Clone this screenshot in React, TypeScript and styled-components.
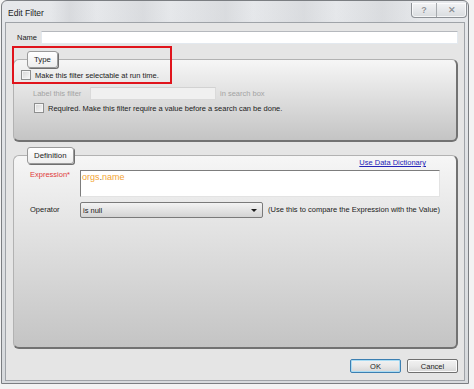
import styled, { createGlobalStyle } from "styled-components";

const Global = createGlobalStyle`
  body {
    margin: 0;
    background: #f3f3f3;
    font-family: "Liberation Sans", Arial, sans-serif;
    font-size: 7.5px;
    color: #1b1b1b;
  }
`;

const Window = styled.div`
  width: 466px;
  height: 381px;
  margin-left: 1px;
  border: 1px solid #7b7e82;
  border-radius: 6px 6px 0 0;
  background: linear-gradient(#e6e8eb, #d7dadd);
  padding: 0 3px 2px 3px;
  display: flex;
  flex-direction: column;
  box-sizing: content-box;
  width: 460px;
  height: 380px;
`;

const TitleBar = styled.div`
  height: 21px;
  display: flex;
  align-items: flex-start;
  justify-content: space-between;
  background: linear-gradient(
    90deg,
    transparent 10%,
    rgba(190, 192, 196, 0.35) 14%,
    transparent 20%,
    rgba(190, 192, 196, 0.3) 30%,
    transparent 36%,
    rgba(190, 192, 196, 0.3) 48%,
    transparent 54%,
    rgba(190, 192, 196, 0.3) 65%,
    transparent 72%,
    rgba(190, 192, 196, 0.3) 82%,
    transparent 90%
  );
`;

const Title = styled.span`
  font-size: 8.5px;
  margin: 7px 0 0 3px;
  color: #1c1c1c;
`;

const CaptionButtons = styled.div`
  display: flex;
  margin-top: 2px;
  margin-right: -2px;
  border: 1px solid #8d9196;
  border-top: none;
  border-radius: 0 0 4px 4px;
  background: linear-gradient(#f2f3f5, #d9dcdf);
  box-shadow: inset 0 0 0 1px rgba(255, 255, 255, 0.7);
`;

const CaptionButton = styled.div<{ $wide?: boolean }>`
  width: ${(p) => (p.$wide ? 29 : 24)}px;
  height: 14px;
  display: flex;
  align-items: center;
  justify-content: center;
  font-size: 9px;
  font-weight: bold;
  color: #8f9297;
  text-shadow: 0 0 1px #fff;
  & + & {
    border-left: 1px solid #a6aaae;
  }
`;

const Client = styled.div`
  flex: 1;
  border: 1px solid #9fa3a8;
  background: #e5e5e5;
  display: flex;
  flex-direction: column;
`;

const NameRow = styled.div`
  display: flex;
  align-items: center;
  margin: 8px 6px 0 11px;
  height: 13px;
`;

const FieldLabel = styled.span<{ $width?: number; $color?: string }>`
  width: ${(p) => (p.$width ? `${p.$width}px` : "auto")};
  flex-shrink: 0;
  color: ${(p) => p.$color ?? "#1b1b1b"};
  white-space: nowrap;
`;

const TextInput = styled.div<{ $disabled?: boolean; $width?: number }>`
  height: 13px;
  box-sizing: border-box;
  ${(p) => (p.$width ? `width: ${p.$width}px;` : "flex: 1;")}
  background: ${(p) => (p.$disabled ? "#f0f0f0" : "#ffffff")};
  border: 1px solid ${(p) => (p.$disabled ? "#dadada" : "#e3e9ef")};
  border-top-color: ${(p) => (p.$disabled ? "#d2d2d2" : "#b5b8bd")};
`;

const Group = styled.div<{ $top: number }>`
  position: relative;
  display: flex;
  flex-direction: column;
  margin: ${(p) => p.$top}px 6px 0 7px;
`;

const Tab = styled.div`
  align-self: flex-start;
  position: relative;
  z-index: 1;
  height: 15px;
  margin: 0 0 -9px 14px;
  padding: 0 6px;
  display: flex;
  align-items: center;
  font-size: 7.8px;
  background: linear-gradient(#ffffff, #eeeeee);
  border: 1px solid #9a9a9a;
  border-radius: 3px;
  box-shadow: 1px 1px 0 #6f6f6f;
`;

const Panel = styled.div<{ $height: number }>`
  height: ${(p) => p.$height}px;
  box-sizing: border-box;
  border: 1px solid #b2b2b2;
  border-right: 2px solid #727272;
  border-bottom: 2px solid #727272;
  border-radius: 6px;
  background: linear-gradient(#f6f6f6, #c4c4c4);
  display: flex;
  flex-direction: column;
`;

const Highlight = styled.div`
  position: absolute;
  left: -1px;
  top: -5px;
  width: 160px;
  height: 38px;
  box-sizing: border-box;
  border: 2px solid #e0141c;
  pointer-events: none;
  z-index: 2;
`;

const CheckRow = styled.div<{ $indent: number; $top: number }>`
  display: flex;
  align-items: center;
  gap: 4px;
  margin: ${(p) => p.$top}px 0 0 ${(p) => p.$indent}px;
  white-space: nowrap;
`;

const Checkbox = styled.div`
  width: 10px;
  height: 10px;
  box-sizing: border-box;
  border: 1px solid #8e8f8f;
  background: linear-gradient(135deg, #d6d6d6, #f8f8f8);
  box-shadow: inset 0 0 0 1px #f4f4f4;
  flex-shrink: 0;
`;

const InlineRow = styled.div<{ $indent: number; $top: number }>`
  display: flex;
  align-items: center;
  gap: 4px;
  margin: ${(p) => p.$top}px 0 0 ${(p) => p.$indent}px;
  white-space: nowrap;
`;

const LinkRow = styled.div`
  display: flex;
  justify-content: flex-end;
  height: 11px;
  margin-top: 2px;
  padding-right: 30px;
`;

const Link = styled.span`
  color: #2323b8;
  text-decoration: underline;
`;

const FormRow = styled.div<{ $top: number }>`
  display: flex;
  align-items: flex-start;
  margin: ${(p) => p.$top}px 16px 0 16px;
`;

const ExpressionBox = styled.div`
  flex: 1;
  height: 27px;
  box-sizing: border-box;
  background: #ffffff;
  border: 1px solid #e3e3e3;
  border-top-color: #7d7d7d;
  border-left-color: #7d7d7d;
  padding: 1px 0 0 1px;
  font-size: 9px;
  line-height: 11px;
  color: #f3a535;
`;

const Dot = styled.span`
  color: #5a5a5a;
`;

const Select = styled.div`
  width: 183px;
  height: 16px;
  box-sizing: border-box;
  border: 1px solid #7a7a7a;
  border-radius: 2px;
  background: linear-gradient(#f3f3f3, #e4e4e4 50%, #d4d4d4);
  display: flex;
  align-items: center;
  justify-content: space-between;
  padding: 0 5px 0 2px;
`;

const Arrow = styled.span`
  width: 0;
  height: 0;
  border-left: 3px solid transparent;
  border-right: 3px solid transparent;
  border-top: 3px solid #1b1b1b;
`;

const Note = styled.span`
  margin-left: 5px;
  line-height: 16px;
  white-space: nowrap;
`;

const ButtonRow = styled.div`
  display: flex;
  justify-content: flex-end;
  gap: 6px;
  margin: 10px 6px 0 0;
`;

const Button = styled.div<{ $default?: boolean }>`
  width: 51px;
  height: 14px;
  box-sizing: border-box;
  display: flex;
  align-items: center;
  justify-content: center;
  border-radius: 2px;
  border: 1px solid ${(p) => (p.$default ? "#3c7fb1" : "#707070")};
  box-shadow: inset 0 0 0 1px ${(p) => (p.$default ? "#a9dcf4" : "#fbfbfb")};
  background: linear-gradient(#f2f2f2, #e8e8e8 50%, #d6d6d6);
`;

export default function App() {
  return (
    <>
      <Global />
      <Window>
        <TitleBar>
          <Title>Edit Filter</Title>
          <CaptionButtons>
            <CaptionButton>?</CaptionButton>
            <CaptionButton $wide>✕</CaptionButton>
          </CaptionButtons>
        </TitleBar>
        <Client>
          <NameRow>
            <FieldLabel $width={24}>Name</FieldLabel>
            <TextInput />
          </NameRow>

          <Group $top={7}>
            <Highlight />
            <Tab>Type</Tab>
            <Panel $height={83}>
              <CheckRow $indent={7} $top={10}>
                <Checkbox />
                <span>Make this filter selectable at run time.</span>
              </CheckRow>
              <InlineRow $indent={19} $top={7}>
                <FieldLabel $width={53} $color="#a4a4a4">
                  Label this filter
                </FieldLabel>
                <TextInput $disabled $width={126} />
                <FieldLabel $color="#a4a4a4">in search box</FieldLabel>
              </InlineRow>
              <CheckRow $indent={20} $top={3}>
                <Checkbox />
                <span>
                  Required. Make this filter require a value before a search can be done.
                </span>
              </CheckRow>
            </Panel>
          </Group>

          <Group $top={5}>
            <Tab>Definition</Tab>
            <Panel $height={194}>
              <LinkRow>
                <Link>Use Data Dictionary</Link>
              </LinkRow>
              <FormRow $top={1}>
                <FieldLabel $width={50} $color="#e03a3a">
                  Expression*
                </FieldLabel>
                <ExpressionBox>
                  orgs<Dot>.</Dot>name
                </ExpressionBox>
              </FormRow>
              <FormRow $top={5}>
                <FieldLabel $width={50} style={{ lineHeight: "16px" }}>
                  Operator
                </FieldLabel>
                <Select>
                  <span>is null</span>
                  <Arrow />
                </Select>
                <Note>(Use this to compare the Expression with the Value)</Note>
              </FormRow>
            </Panel>
          </Group>

          <ButtonRow>
            <Button $default>OK</Button>
            <Button>Cancel</Button>
          </ButtonRow>
        </Client>
      </Window>
    </>
  );
}
